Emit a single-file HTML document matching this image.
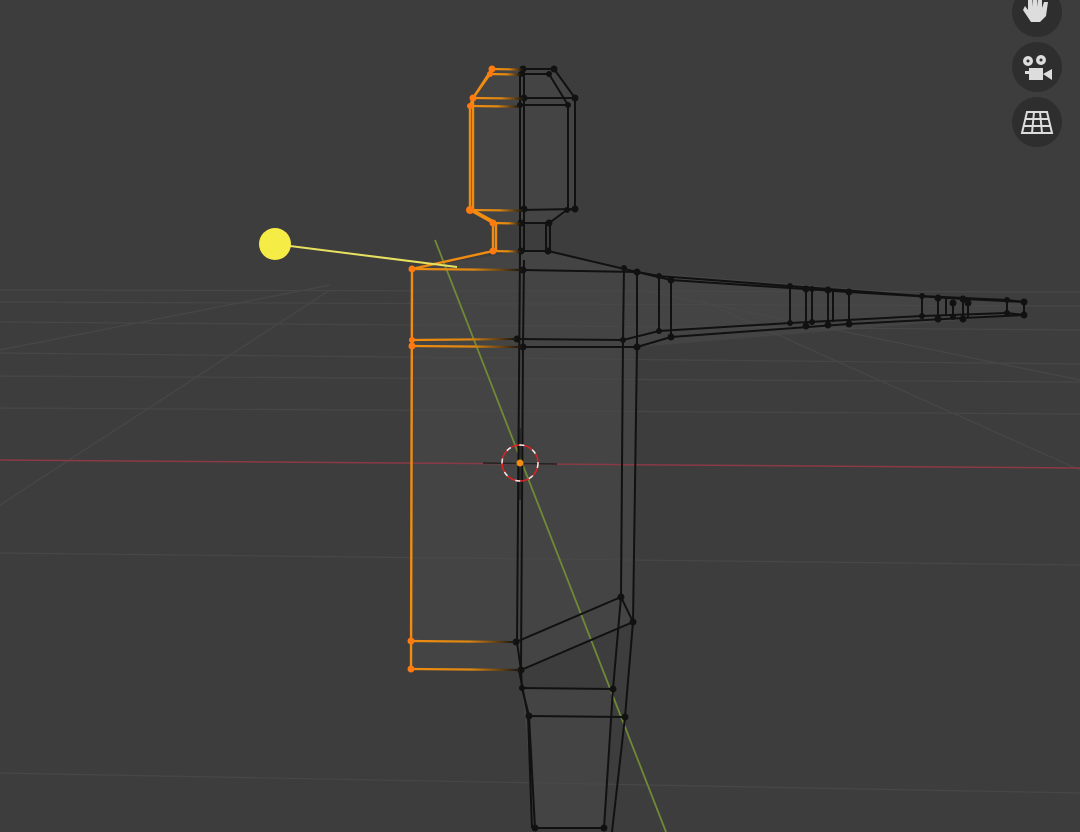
<!DOCTYPE html>
<html><head><style>html,body{margin:0;padding:0;background:#3d3d3d;width:1080px;height:832px;overflow:hidden}</style></head>
<body>
<svg width="1080" height="832" viewBox="0 0 1080 832" xmlns="http://www.w3.org/2000/svg">
<defs>
<linearGradient id="og" x1="0" x2="1" y1="0" y2="0"><stop offset="0" stop-color="#f08c10"/><stop offset="0.55" stop-color="#e08810"/><stop offset="1" stop-color="#111"/></linearGradient>
</defs>
<rect width="1080" height="832" fill="#3d3d3d"/>
<g stroke="#474747" stroke-width="1.2" fill="none">
<line x1="0" y1="290" x2="1080" y2="292"/>
<line x1="0" y1="302" x2="1080" y2="306"/>
<line x1="0" y1="322" x2="1080" y2="330"/>
<line x1="0" y1="353" x2="1080" y2="364"/>
<line x1="0" y1="376" x2="1080" y2="382"/>
<line x1="0" y1="408" x2="1080" y2="414"/>
<line x1="0" y1="553" x2="1080" y2="565"/>
<line x1="0" y1="773" x2="1080" y2="793"/>
<line x1="0" y1="350" x2="330" y2="285"/>
<line x1="0" y1="505" x2="330" y2="290"/>
<line x1="640" y1="290" x2="1080" y2="380"/>
<line x1="700" y1="300" x2="1080" y2="470"/>
</g>
<!-- body fill -->
<g fill="#4a4a4a" fill-opacity="0.6">
<polygon points="412,269 520,251 548,251 637,272 637,347 633,622 521,670 411,669"/>
<polygon points="470,106 473,98 492,69 554,69 575,98 575,209 549,223 493,223 470,210"/>
<polygon points="522,688 613,689 604,828 535,828"/>
<polygon points="637,272 1024,302 1024,315 637,347"/>
</g>
<line x1="0" y1="460" x2="1080" y2="468" stroke="#8a3a44" stroke-width="1.5"/>
<line x1="435" y1="240" x2="666" y2="832" stroke="#6f8a36" stroke-width="1.8"/>
<!-- black wire -->
<g stroke="#111" stroke-width="2" fill="none">
<polyline points="523,69 554,69 575,98 575,209 567,210 549,223 520,223"/>
<polyline points="521,74 549,74 568,105 568,210"/>
<line x1="524" y1="98" x2="575" y2="98"/><line x1="520" y1="105" x2="568" y2="105"/>
<line x1="520" y1="210" x2="575" y2="209"/>
<line x1="524" y1="69" x2="524" y2="251"/><line x1="520" y1="74" x2="520" y2="251"/>
<line x1="546" y1="222" x2="546" y2="251"/><line x1="550" y1="222" x2="550" y2="251"/>
<line x1="520" y1="251" x2="548" y2="251"/>
<polyline points="548,251 637,272 659,276"/>
<line x1="523" y1="270" x2="637" y2="272"/>
<line x1="517" y1="339" x2="623" y2="340"/><line x1="523" y1="347" x2="637" y2="347"/>
<polyline points="520,251 517,642 521,670"/>
<polyline points="524,260 523,347 521,670"/>
<polyline points="624,268 623,340 621,597"/>
<polyline points="637,272 637,347 633,622"/>
<line x1="516" y1="642" x2="621" y2="597"/><line x1="521" y1="670" x2="633" y2="622"/>
<line x1="621" y1="597" x2="633" y2="622"/>
<line x1="522" y1="688" x2="613" y2="689"/><line x1="529" y1="716" x2="625" y2="717"/>
<polyline points="521,670 522,688 529,716 535,828"/>
<polyline points="519,670 528,716 532,828"/>
<polyline points="633,622 625,717 612,832"/>
<polyline points="621,597 613,689 604,828"/>
<line x1="535" y1="828" x2="604" y2="828"/>
<polyline points="637,272 659,276 790,286 922,296 1007,300 1024,302"/>
<polyline points="637,272 671,280 849,292 964,299 1024,302"/>
<polyline points="623,340 659,331 790,323 922,316 1007,313 1024,315"/>
<polyline points="637,347 671,337 849,324 964,318 1024,315"/>
<line x1="659" y1="276" x2="659" y2="331"/><line x1="671" y1="280" x2="671" y2="337"/>
<line x1="790" y1="286" x2="790" y2="323"/><line x1="806" y1="289" x2="806" y2="326"/>
<line x1="812" y1="289" x2="812" y2="322"/><line x1="828" y1="290" x2="828" y2="325"/>
<line x1="833" y1="290" x2="833" y2="322"/><line x1="849" y1="292" x2="849" y2="324"/>
<line x1="922" y1="296" x2="922" y2="316"/><line x1="938" y1="298" x2="938" y2="319"/>
<line x1="946" y1="297" x2="946" y2="316"/><line x1="953" y1="303" x2="953" y2="317"/>
<line x1="963" y1="299" x2="963" y2="319"/><line x1="968" y1="303" x2="968" y2="318"/>
<line x1="1007" y1="300" x2="1007" y2="313"/><line x1="1024" y1="302" x2="1024" y2="315"/>
</g>
<g fill="#111">
<circle cx="523" cy="69" r="3.5"/><circle cx="554" cy="69" r="3.5"/><circle cx="549" cy="74" r="3"/><circle cx="521" cy="74" r="3"/>
<circle cx="524" cy="98" r="3.5"/><circle cx="575" cy="98" r="3.5"/><circle cx="520" cy="105" r="3"/><circle cx="568" cy="105" r="3"/>
<circle cx="524" cy="209" r="3.5"/><circle cx="575" cy="209" r="3.5"/><circle cx="567" cy="210" r="3"/>
<circle cx="521" cy="223" r="3.5"/><circle cx="549" cy="223" r="3.5"/><circle cx="521" cy="251" r="3.5"/><circle cx="548" cy="251" r="3.5"/>
<circle cx="523" cy="270" r="3.5"/><circle cx="624" cy="268" r="3"/><circle cx="637" cy="272" r="3.5"/>
<circle cx="517" cy="339" r="3.5"/><circle cx="523" cy="347" r="3.5"/><circle cx="623" cy="340" r="3"/><circle cx="637" cy="347" r="3.5"/>
<circle cx="516" cy="642" r="3.5"/><circle cx="521" cy="670" r="3.5"/><circle cx="621" cy="597" r="3.5"/><circle cx="633" cy="622" r="3.5"/>
<circle cx="522" cy="688" r="3"/><circle cx="613" cy="689" r="3.5"/><circle cx="529" cy="716" r="3.5"/><circle cx="625" cy="717" r="3.5"/>
<circle cx="535" cy="828" r="3.5"/><circle cx="604" cy="828" r="3.5"/>
<circle cx="659" cy="276" r="3"/><circle cx="671" cy="280" r="3.5"/><circle cx="659" cy="331" r="3"/><circle cx="671" cy="337" r="3.5"/>
<circle cx="790" cy="286" r="3"/><circle cx="806" cy="289" r="3.5"/><circle cx="812" cy="289" r="3"/><circle cx="828" cy="290" r="3.5"/><circle cx="849" cy="292" r="3.5"/>
<circle cx="790" cy="323" r="3"/><circle cx="806" cy="326" r="3.5"/><circle cx="812" cy="322" r="3"/><circle cx="828" cy="325" r="3.5"/><circle cx="849" cy="324" r="3.5"/>
<circle cx="922" cy="296" r="3"/><circle cx="938" cy="298" r="3.5"/><circle cx="953" cy="303" r="3.5"/><circle cx="963" cy="299" r="3.5"/><circle cx="968" cy="303" r="3.5"/>
<circle cx="922" cy="316" r="3"/><circle cx="938" cy="319" r="3.5"/><circle cx="953" cy="317" r="3"/><circle cx="963" cy="319" r="3.5"/>
<circle cx="1007" cy="300" r="3"/><circle cx="1024" cy="302" r="3.5"/><circle cx="1007" cy="313" r="3"/><circle cx="1024" cy="315" r="3.5"/>
</g>
<!-- orange -->
<g stroke="url(#og)" stroke-width="2.2">
<line x1="492" y1="69" x2="523" y2="69.6"/><line x1="490" y1="74" x2="521" y2="74.6"/>
<line x1="473" y1="98" x2="524" y2="98.6"/><line x1="470" y1="106" x2="520" y2="106.6"/>
<line x1="470" y1="210" x2="524" y2="210.6"/><line x1="493" y1="223" x2="521" y2="223.6"/>
<line x1="493" y1="251" x2="521" y2="251.6"/><line x1="412" y1="269" x2="523" y2="270"/>
<line x1="412" y1="340" x2="517" y2="339"/><line x1="412" y1="346" x2="523" y2="347"/>
<line x1="411" y1="641" x2="516" y2="642"/><line x1="411" y1="669" x2="521" y2="670"/>
</g>
<g stroke="#f08c10" stroke-width="2.4" fill="none">
<polyline points="492,69 473,98 470,106 470,210 493,223 493,251 412,269 411,669"/>
<polyline points="490,74 473,98"/><line x1="473" y1="98" x2="473" y2="210"/>
<line x1="496" y1="223" x2="496" y2="251"/>
<line x1="473" y1="210" x2="493" y2="221"/>
</g>
<g fill="#ff7a10">
<circle cx="492" cy="69" r="3.5"/><circle cx="490" cy="74" r="3"/><circle cx="473" cy="98" r="3.5"/><circle cx="470" cy="106" r="3"/>
<circle cx="470" cy="210" r="4"/><circle cx="493" cy="223" r="3.5"/><circle cx="493" cy="251" r="3.5"/><circle cx="412" cy="269" r="3.5"/>
<circle cx="412" cy="340" r="3"/><circle cx="412" cy="346" r="3.5"/><circle cx="411" cy="641" r="3.5"/><circle cx="411" cy="669" r="3.5"/>
</g>
<!-- light -->
<line x1="290" y1="246" x2="457" y2="267" stroke="#e8e060" stroke-width="2"/>
<circle cx="275" cy="244" r="16" fill="#f5ec45"/>
<!-- cursor -->
<line x1="483" y1="463" x2="557" y2="464" stroke="#222" stroke-width="1.5"/>
<line x1="520" y1="428" x2="520" y2="500" stroke="#222" stroke-width="1.5"/>
<circle cx="520" cy="463" r="18" fill="none" stroke="#d22" stroke-width="1.5"/>
<circle cx="520" cy="463" r="18" fill="none" stroke="#eee" stroke-width="1.5" stroke-dasharray="5 9"/>
<circle cx="520" cy="463" r="3.5" fill="#f08c10"/>
<!-- nav buttons -->
<circle cx="1037" cy="12" r="25" fill="#2e2e2e"/>
<circle cx="1037" cy="67" r="25" fill="#2e2e2e"/>
<circle cx="1037" cy="122" r="25" fill="#2e2e2e"/>
<path d="M1023 10 L1025 6 L1028 10 L1028 -2 L1032 -2 L1032 7 L1033 -4 L1037 -4 L1037 7 L1038 -2 L1042 -2 L1042 8 L1044 2 L1048 2 L1046 16 L1040 22 L1031 22 Z" fill="#ddd"/>
<circle cx="1028" cy="61" r="5" fill="#ddd"/><circle cx="1041" cy="60" r="5" fill="#ddd"/>
<circle cx="1028" cy="61" r="1.5" fill="#2e2e2e"/><circle cx="1041" cy="60" r="1.5" fill="#2e2e2e"/>
<rect x="1029" y="68" width="14" height="12" fill="#ddd"/><rect x="1025" y="71" width="4" height="3" fill="#ddd"/>
<polygon points="1043,74 1052,69 1052,80" fill="#ddd"/>
<g stroke="#ddd" stroke-width="2" fill="none">
<polygon points="1027,112 1047,112 1052,133 1022,133"/>
<line x1="1025" y1="119" x2="1049" y2="119"/><line x1="1023" y1="126" x2="1050" y2="126"/>
<line x1="1034" y1="112" x2="1032" y2="133"/><line x1="1040" y1="112" x2="1042" y2="133"/>
</g>
</svg>
</body></html>
